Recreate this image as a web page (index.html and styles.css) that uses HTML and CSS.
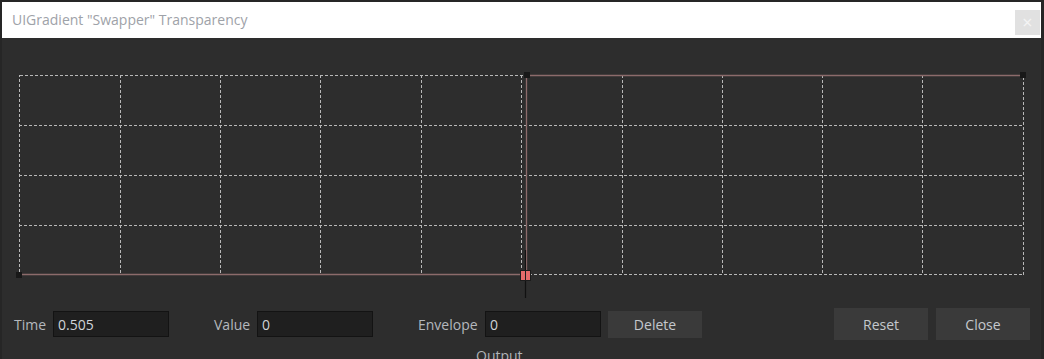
FILE: index.html
```html
<!DOCTYPE html>
<html lang="en">
<head>
  <meta charset="UTF-8">
  <meta name="viewport" content="width=device-width, initial-scale=1.0">
  <title>UIGradient Transparency</title>
  <link rel="stylesheet" href="styles.css">
</head>
<body>

<div class="dialog">
  <div class="titlebar">
    <div class="title">UIGradient "Swapper" Transparency</div>
    <div class="close-x">&times;</div>
  </div>

  <!-- Curve editor -->
  <svg class="graph" width="1039" height="262" viewBox="2 38 1039 262">
    <g class="grid">
      <rect x="19.5" y="75.5" width="1004" height="199"/>
      <line x1="120.5" y1="75" x2="120.5" y2="274"/>
      <line x1="220.5" y1="75" x2="220.5" y2="274"/>
      <line x1="320.5" y1="75" x2="320.5" y2="274"/>
      <line x1="421.5" y1="75" x2="421.5" y2="274"/>
      <line x1="521.5" y1="75" x2="521.5" y2="274"/>
      <line x1="622.5" y1="75" x2="622.5" y2="274"/>
      <line x1="722.5" y1="75" x2="722.5" y2="274"/>
      <line x1="822.5" y1="75" x2="822.5" y2="274"/>
      <line x1="922.5" y1="75" x2="922.5" y2="274"/>
      <line x1="19" y1="125.5" x2="1023" y2="125.5"/>
      <line x1="19" y1="175.5" x2="1023" y2="175.5"/>
      <line x1="19" y1="225.5" x2="1023" y2="225.5"/>
    </g>
    <path class="curve" d="M19.5 274.5 H526.5 V75.5 H1023.5"/>
    <line class="marker" x1="525.5" y1="250" x2="525.5" y2="298"/>
    <rect class="key" x="16" y="272" width="6" height="6"/>
    <rect class="key" x="524" y="72" width="6" height="6"/>
    <rect class="key" x="1020" y="72" width="6" height="6"/>
    <g class="handle">
      <rect class="handle-box" x="520" y="270" width="11" height="11"/>
      <rect class="handle-fill" x="521" y="271" width="4" height="9"/>
      <rect class="handle-fill" x="526" y="271" width="4" height="9"/>
    </g>
  </svg>

  <!-- Controls -->
  <div class="controls">
    <div class="field field-time">
      <span class="label">Time</span>
      <input class="num" type="text" value="0.505">
    </div>
    <div class="field field-value">
      <span class="label">Value</span>
      <input class="num" type="text" value="0">
    </div>
    <div class="field field-env">
      <span class="label">Envelope</span>
      <input class="num" type="text" value="0">
    </div>
    <button class="btn btn-delete">Delete</button>
    <button class="btn btn-big btn-reset">Reset</button>
    <button class="btn btn-big">Close</button>
  </div>

  <div class="output">Output</div>
</div>

</body>
</html>
```

FILE: styles.css
```css
/* Page */
body {
  margin: 0;
  background: #262626;
  font-family: "Open Sans", "Noto Sans", sans-serif;
  overflow: hidden;
}
.dialog {
  margin: 2px 0 0 2px;
  width: 1039px;
  height: 357px;
  background: #2d2d2d;
  overflow: hidden;
}

/* Title bar */
.titlebar {
  height: 36px;
  background: #ffffff;
  display: flex;
  align-items: flex-start;
  justify-content: space-between;
}
.title {
  font-size: 14px;
  color: #9ea2a8;
  padding: 8px 0 0 10px;
}
.close-x {
  width: 25px;
  height: 25px;
  margin: 8px 1px 0 0;
  background: #e1e1e1;
  color: #f4f4f4;
  font-size: 18px;
  line-height: 24px;
  text-align: center;
}

/* Graph */
.graph {
  display: block;
}
.grid rect,
.grid line {
  fill: none;
  stroke: #b8b8b8;
  stroke-width: 1;
  stroke-dasharray: 3 2;
  shape-rendering: crispEdges;
}
.curve {
  fill: none;
  stroke: #8c6b6b;
  stroke-width: 1.3;
}
.marker {
  stroke: #111111;
  stroke-width: 1.2;
}
.key { fill: #181818; }
.handle-box { fill: #1c1c1c; }
.handle-fill { fill: #e66a6a; }

/* Controls row */
.controls {
  display: flex;
  align-items: center;
  height: 32px;
  padding: 8px 11px 0 12px;
}
.field {
  display: flex;
  align-items: center;
  justify-content: space-between;
}
.field-time { width: 155px; }
.field-value { width: 159px; margin-left: 45px; }
.field-env { width: 183px; margin-left: 45px; }
.label {
  font-size: 14px;
  color: #b4b8bd;
}
.num {
  box-sizing: border-box;
  width: 116px;
  height: 26px;
  background: #1f1f1f;
  border: 1px solid #131313;
  color: #d0d4d8;
  font-family: inherit;
  font-size: 14px;
  padding: 0 4px;
  outline: none;
}
.btn {
  border: none;
  background: #3a3a3a;
  color: #c4c8cd;
  font-family: inherit;
  font-size: 14px;
  padding: 0;
}
.btn-delete {
  width: 94px;
  height: 27px;
  margin-left: 7px;
}
.btn-big {
  width: 94px;
  height: 32px;
  margin-left: 8px;
}
.btn-reset { margin-left: auto; }

/* Underlying panel label that shows below */
.output {
  padding: 6px 0 0 474px;
  font-size: 14px;
  color: #b0b4b8;
}
```
